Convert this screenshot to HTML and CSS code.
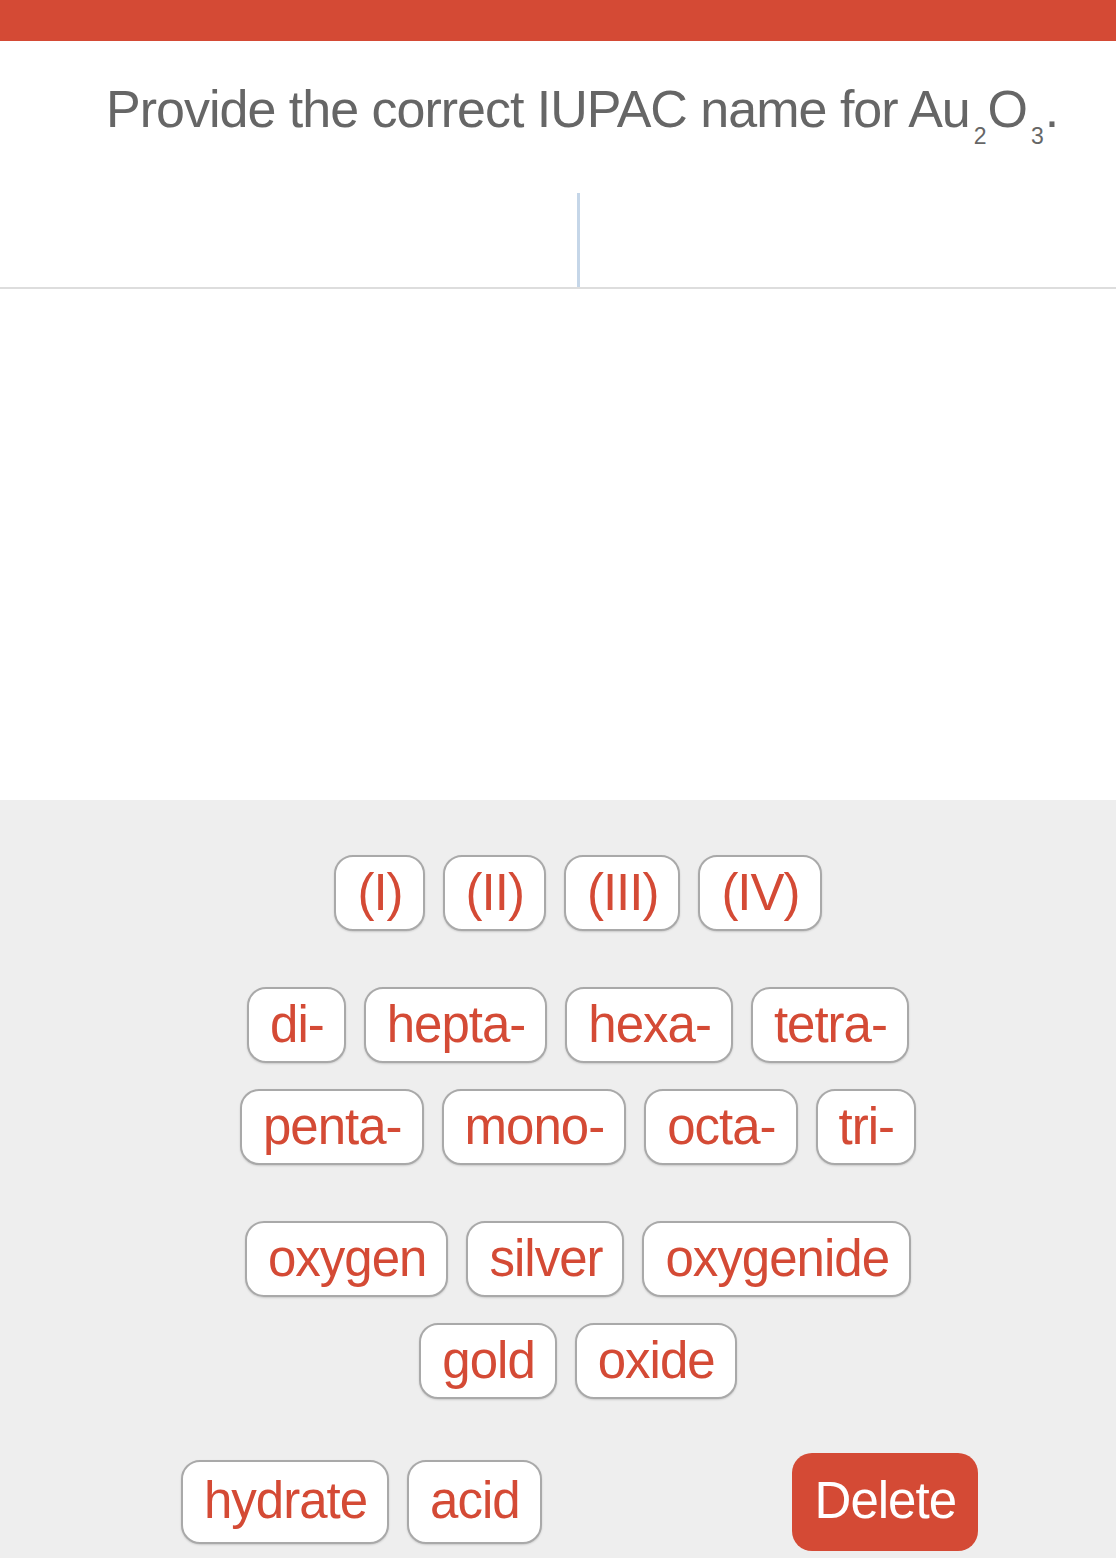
FILE: index.html
```html
<!DOCTYPE html>
<html lang="en">
<head>
<meta charset="utf-8">
<title>IUPAC name</title>
<link rel="stylesheet" href="styles.css">
</head>
<body>
<header class="topbar"></header>
<main class="question">
  <h1 class="prompt">Provide the correct IUPAC name for Au<sub>2</sub>O<sub>3</sub>.</h1>
  <div class="answer"><span class="caret"></span></div>
</main>
<section class="keyboard">
  <div class="group">
    <div class="row">
      <button class="key">(I)</button>
      <button class="key">(II)</button>
      <button class="key">(III)</button>
      <button class="key">(IV)</button>
    </div>
  </div>
  <div class="group">
    <div class="row">
      <button class="key">di-</button>
      <button class="key">hepta-</button>
      <button class="key">hexa-</button>
      <button class="key">tetra-</button>
    </div>
    <div class="row">
      <button class="key">penta-</button>
      <button class="key">mono-</button>
      <button class="key">octa-</button>
      <button class="key">tri-</button>
    </div>
  </div>
  <div class="group">
    <div class="row">
      <button class="key">oxygen</button>
      <button class="key">silver</button>
      <button class="key">oxygenide</button>
    </div>
    <div class="row">
      <button class="key">gold</button>
      <button class="key">oxide</button>
    </div>
  </div>
  <div class="actions">
    <div class="row-left">
      <button class="key key-tall">hydrate</button>
      <button class="key key-tall">acid</button>
    </div>
    <button class="delete">Delete</button>
  </div>
</section>
</body>
</html>
```

FILE: styles.css
```css
html, body {
  height: 100%;
}
body {
  margin: 0;
  display: flex;
  flex-direction: column;
  background: #ffffff;
  font-family: "Liberation Sans", Arial, Helvetica, sans-serif;
}
.topbar {
  height: 41px;
  background: #d44a35;
  flex: none;
}
.question {
  flex: none;
  height: 759px;
}
.prompt {
  margin: 0;
  padding: 38px 0 54px 106px;
  font-size: 52px;
  font-weight: normal;
  line-height: 60px;
  letter-spacing: -1px;
  color: #666666;
  white-space: nowrap;
}
.prompt sub {
  font-size: 23px;
  line-height: 0;
  vertical-align: -17px;
  letter-spacing: 0;
  margin: 0 1px 0 4px;
}
.answer {
  height: 94px;
  border-bottom: 2px solid #dddddd;
  display: flex;
  justify-content: center;
  padding-left: 40px;
}
.caret {
  display: block;
  width: 3px;
  height: 94px;
  background: #c5d6e8;
}
.keyboard {
  flex: 1;
  background: #eeeeee;
  padding: 55px 0 0 40px;
  display: flex;
  flex-direction: column;
}
.group {
  display: flex;
  flex-direction: column;
  gap: 26px;
}
.group + .group {
  margin-top: 56px;
}
.row {
  display: flex;
  justify-content: center;
  gap: 18px;
}
.key {
  font-family: "Liberation Sans", Arial, Helvetica, sans-serif;
  font-size: 51px;
  line-height: 52px;
  letter-spacing: -1px;
  color: #d44a35;
  background: #ffffff;
  border: 2px solid #a9a9a9;
  border-radius: 19px;
  padding: 10px 20px 10px 21px;
  box-shadow: 0 1px 2px rgba(0, 0, 0, 0.15);
  margin: 0;
}
.actions {
  margin-top: 54px;
  display: flex;
  justify-content: space-between;
  align-items: center;
  padding: 0 138px 0 141px;
}
.row-left {
  display: flex;
  gap: 18px;
}
.key-tall {
  padding-top: 13px;
  padding-bottom: 15px;
}
.delete {
  font-family: "Liberation Sans", Arial, Helvetica, sans-serif;
  font-size: 51px;
  line-height: 52px;
  letter-spacing: -1px;
  color: #ffffff;
  background: #d44a35;
  border: none;
  border-radius: 20px;
  padding: 22px 22px 24px 23px;
  margin: 0;
}
```
